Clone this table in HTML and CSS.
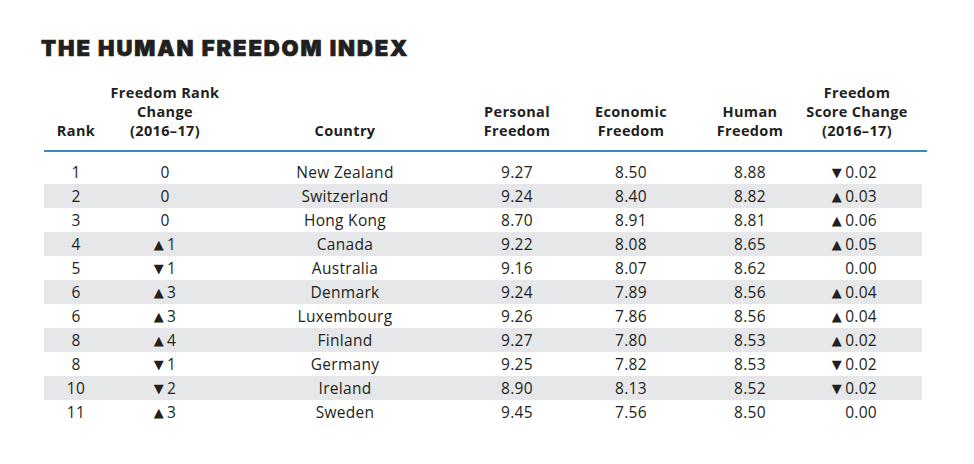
FILE: index.html
```html
<!DOCTYPE html>
<html>
<head>
<meta charset="utf-8">
<link rel="stylesheet" href="styles.css">
</head>
<body>
<div class="page">
  <h1 class="title">THE HUMAN FREEDOM INDEX</h1>
  <div class="head">
    <div class="hc">Rank</div>
    <div class="hc">Freedom Rank<br>Change<br>(2016–17)</div>
    <div class="hc">Country</div>
    <div class="hc">Personal<br>Freedom</div>
    <div class="hc">Economic<br>Freedom</div>
    <div class="hc">Human<br>Freedom</div>
    <div class="hc score-h">Freedom<br>Score Change<br>(2016–17)</div>
  </div>
  <div class="rows">
    <div class="row"><span>1</span><span>0</span><span>New Zealand</span><span>9.27</span><span>8.50</span><span>8.88</span><span class="sc"><i class="dn">▼</i>0.02</span></div>
    <div class="row alt"><span>2</span><span>0</span><span>Switzerland</span><span>9.24</span><span>8.40</span><span>8.82</span><span class="sc"><i class="up">▲</i>0.03</span></div>
    <div class="row"><span>3</span><span>0</span><span>Hong Kong</span><span>8.70</span><span>8.91</span><span>8.81</span><span class="sc"><i class="up">▲</i>0.06</span></div>
    <div class="row alt"><span>4</span><span><i class="up">▲</i>1</span><span>Canada</span><span>9.22</span><span>8.08</span><span>8.65</span><span class="sc"><i class="up">▲</i>0.05</span></div>
    <div class="row"><span>5</span><span><i class="dn">▼</i>1</span><span>Australia</span><span>9.16</span><span>8.07</span><span>8.62</span><span class="sc">0.00</span></div>
    <div class="row alt"><span>6</span><span><i class="up">▲</i>3</span><span>Denmark</span><span>9.24</span><span>7.89</span><span>8.56</span><span class="sc"><i class="up">▲</i>0.04</span></div>
    <div class="row"><span>6</span><span><i class="up">▲</i>3</span><span>Luxembourg</span><span>9.26</span><span>7.86</span><span>8.56</span><span class="sc"><i class="up">▲</i>0.04</span></div>
    <div class="row alt"><span>8</span><span><i class="up">▲</i>4</span><span>Finland</span><span>9.27</span><span>7.80</span><span>8.53</span><span class="sc"><i class="up">▲</i>0.02</span></div>
    <div class="row"><span>8</span><span><i class="dn">▼</i>1</span><span>Germany</span><span>9.25</span><span>7.82</span><span>8.53</span><span class="sc"><i class="dn">▼</i>0.02</span></div>
    <div class="row alt"><span>10</span><span><i class="dn">▼</i>2</span><span>Ireland</span><span>8.90</span><span>8.13</span><span>8.52</span><span class="sc"><i class="dn">▼</i>0.02</span></div>
    <div class="row"><span>11</span><span><i class="up">▲</i>3</span><span>Sweden</span><span>9.45</span><span>7.56</span><span>8.50</span><span class="sc">0.00</span></div>
  </div>
</div>
</body>
</html>
```
FILE: styles.css
```css
html, body {
  margin: 0;
  padding: 0;
  background: #ffffff;
}
body {
  font-family: "Open Sans", "Lato", sans-serif;
  color: #231f20;
}
.page {
  padding: 36px 0 0 44px;
}
.title {
  margin: 0 0 0 -3px;
  font-family: "Inter", "Liberation Sans", sans-serif;
  font-weight: 900;
  font-size: 22px;
  line-height: 24px;
  letter-spacing: 1.9px;
  -webkit-text-stroke: 0.7px #231f20;
  color: #231f20;
}
.head {
  display: grid;
  grid-template-columns: 64px 114px 246px 98px 130px 108px 123px;
  width: 883px;
  margin-top: 23px;
  padding-bottom: 10px;
  border-bottom: 2px solid #3a86c6;
  align-items: end;
}
.hc {
  text-align: center;
  font-weight: 700;
  font-size: 14.5px;
  line-height: 19px;
  letter-spacing: 0.35px;
}
.score-h {
  padding-right: 17px;
}
.rows {
  width: 878px;
  margin-top: 8px;
}
.row {
  display: grid;
  grid-template-columns: 64px 114px 246px 98px 130px 108px 118px;
  height: 24px;
  align-items: center;
  font-size: 15.5px;
  letter-spacing: 0.3px;
}
.row.alt {
  background: #e6e7e8;
}
.row span {
  text-align: center;
}
.row span.sc {
  text-align: right;
  padding-right: 45px;
}
.row i {
  font-family: "DejaVu Sans", sans-serif;
  font-style: normal;
  font-size: 13px;
  margin-right: 3px;
  position: relative;
  top: -1px;
}
```
